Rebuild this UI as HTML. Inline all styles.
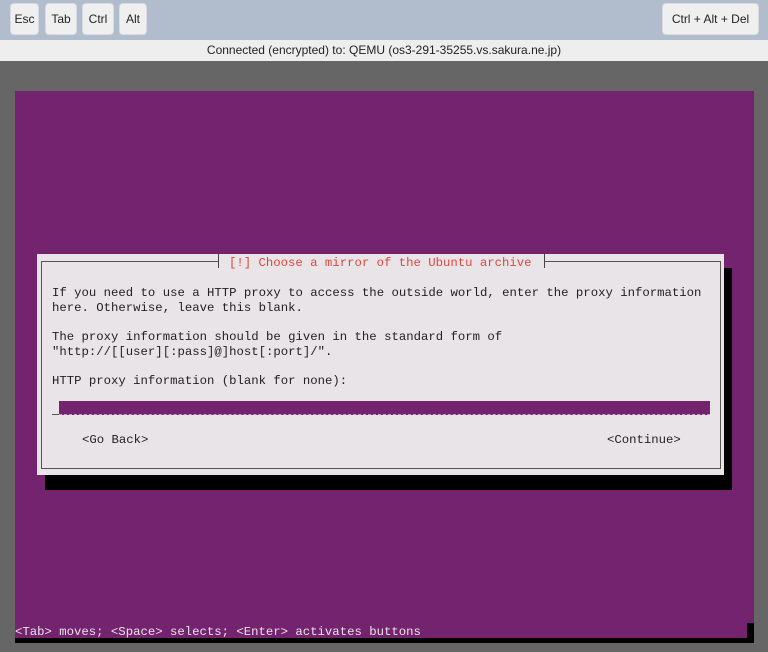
<!DOCTYPE html>
<html><head><meta charset="utf-8"><style>
*{margin:0;padding:0;box-sizing:border-box}
body{width:768px;height:652px;overflow:hidden;background:#666;font-family:"Liberation Sans",sans-serif;position:relative}
.top{position:absolute;left:0;top:0;width:768px;height:40px;background:#b1bccd}
.btn{position:absolute;top:3px;height:32px;background:#efefef;border:1px solid #d8dce2;border-radius:4px;font-size:12px;color:#222;line-height:30px;text-align:center}
.status{position:absolute;left:0;top:40px;width:768px;height:21px;background:#eee;font-size:12px;color:#222;text-align:center;line-height:20px}
.scr{position:absolute;left:15px;top:91px;width:739px;height:547px;background:#74246f}
.mono{font-family:"Liberation Mono",monospace;font-size:12.3px;white-space:pre;position:absolute;line-height:14.7px}
</style></head><body>
<div class="top"></div>
<div class="btn" style="left:10px;width:29px">Esc</div>
<div class="btn" style="left:45px;width:32px">Tab</div>
<div class="btn" style="left:82px;width:32px">Ctrl</div>
<div class="btn" style="left:119px;width:28px">Alt</div>
<div class="btn" style="left:662px;width:97px">Ctrl + Alt + Del</div>
<div class="status">Connected (encrypted) to: QEMU (os3-291-35255.vs.sakura.ne.jp)</div>
<div class="scr"></div>
<div style="position:absolute;left:15px;top:638px;width:739px;height:5px;background:#000"></div>
<div style="position:absolute;left:747px;top:623px;width:7px;height:20px;background:#000"></div>
<div class="mono" style="left:15px;top:625px;color:#e8e4e8">&lt;Tab&gt; moves; &lt;Space&gt; selects; &lt;Enter&gt; activates buttons</div>
<div style="position:absolute;left:45px;top:268px;width:687px;height:222px;background:#000"></div>
<div style="position:absolute;left:37px;top:254px;width:687px;height:221px;background:#e8e4e8"></div>
<div style="position:absolute;left:41px;top:261px;width:680px;height:208px;border:1px solid #555"></div>
<div style="position:absolute;left:218px;top:254px;width:327px;height:14px;background:#e8e4e8;border-left:1px solid #444;border-right:1px solid #444"></div>
<div class="mono" style="left:229px;top:256px;color:#e0463a">[!] Choose a mirror of the Ubuntu archive</div>
<div class="mono" style="left:52px;top:286px;color:#222">If you need to use a HTTP proxy to access the outside world, enter the proxy information
here. Otherwise, leave this blank.

The proxy information should be given in the standard form of
"http://[[user][:pass]@]host[:port]/".

HTTP proxy information (blank for none):</div>
<div style="position:absolute;left:59px;top:401px;width:651px;height:14px;background:#74246f;border-bottom:1px dashed #c9a0c6"></div>
<div style="position:absolute;left:52px;top:414px;width:7px;height:1px;background:#555"></div>
<div class="mono" style="left:82px;top:433px;color:#222">&lt;Go Back&gt;</div>
<div class="mono" style="left:607px;top:433px;color:#222">&lt;Continue&gt;</div>
</body></html>
